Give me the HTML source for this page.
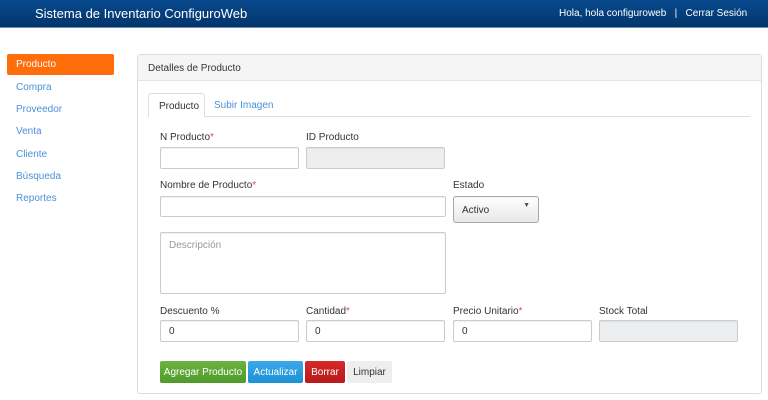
<!DOCTYPE html>
<html><head><meta charset="utf-8"><style>
*{box-sizing:border-box;margin:0;padding:0}
body{width:768px;height:400px;background:#fff;font-family:"Liberation Sans",sans-serif;font-size:10px;color:#333;position:relative;overflow:hidden}
.a{position:absolute;white-space:nowrap}
.hdr{left:0;top:0;width:768px;height:28px;background:linear-gradient(#084a8e,#03356a);border-bottom:1px solid #6a8fb5}
.in{position:absolute;border:1px solid #ccc;border-radius:2px;background:#fff;box-shadow:inset 0 1px 1px rgba(0,0,0,.06);padding-left:8px;font-size:10px;display:flex;align-items:center}
.dis{background:#eceeef}
.r{color:#d9534f}
.nav{left:16px;color:#4a90d9;font-size:10px}
.btn{position:absolute;top:361px;height:22px;border-radius:2px;color:#fff;display:flex;align-items:center;justify-content:center;font-size:10px}
</style></head><body>
<div class="a hdr"></div>
<div class="a" style="left:35px;top:6px;color:#fff;font-size:13px">Sistema de Inventario ConfiguroWeb</div>
<div class="a" style="left:559px;top:8px;color:#fff;font-size:10px">Hola, hola configuroweb &nbsp; | &nbsp; Cerrar Sesión</div>

<div class="a" style="left:7px;top:54px;width:107px;height:21px;background:#ff6c0a;border-radius:2px;color:#fff;padding:5px 0 0 9px">Producto</div>
<div class="a nav" style="top:82px">Compra</div>
<div class="a nav" style="top:104px">Proveedor</div>
<div class="a nav" style="top:126px">Venta</div>
<div class="a nav" style="top:149px">Cliente</div>
<div class="a nav" style="top:171px">Búsqueda</div>
<div class="a nav" style="top:193px">Reportes</div>

<div class="a" style="left:137px;top:54px;width:625px;height:340px;border:1px solid #ddd;border-radius:3px"></div>
<div class="a" style="left:138px;top:55px;width:623px;height:26px;background:#f5f5f5;border-bottom:1px solid #e5e5e5"></div>
<div class="a" style="left:148px;top:63px">Detalles de Producto</div>

<div class="a" style="left:148px;top:116px;width:602px;height:1px;background:#ddd"></div>
<div class="a" style="left:148px;top:93px;width:57px;height:24px;border:1px solid #ddd;border-bottom:none;background:#fff;border-radius:3px 3px 0 0;padding:7px 0 0 10px">Producto</div>
<div class="a" style="left:214px;top:100px;color:#4a90d9">Subir Imagen</div>

<div class="a" style="left:160px;top:132px">N Producto<span class="r">*</span></div>
<div class="a" style="left:306px;top:132px">ID Producto</div>
<div class="in" style="left:160px;top:147px;width:139px;height:22px"></div>
<div class="in dis" style="left:306px;top:147px;width:139px;height:22px"></div>

<div class="a" style="left:160px;top:180px">Nombre de Producto<span class="r">*</span></div>
<div class="a" style="left:453px;top:180px">Estado</div>
<div class="in" style="left:160px;top:196px;width:286px;height:21px"></div>
<div class="in" style="left:453px;top:196px;width:86px;height:27px;background:linear-gradient(#fff,#e8e8e8);border-color:#aaa;border-radius:3px;padding-top:2px">Activo<span style="position:absolute;right:8px;top:5px;font-size:7px;color:#555">▼</span></div>

<div class="in" style="left:160px;top:232px;width:286px;height:62px;align-items:flex-start;padding-top:7px;color:#999">Descripción</div>

<div class="a" style="left:160px;top:306px">Descuento %</div>
<div class="a" style="left:306px;top:306px">Cantidad<span class="r">*</span></div>
<div class="a" style="left:453px;top:306px">Precio Unitario<span class="r">*</span></div>
<div class="a" style="left:599px;top:306px">Stock Total</div>
<div class="in" style="left:160px;top:320px;width:139px;height:22px">0</div>
<div class="in" style="left:306px;top:320px;width:139px;height:22px">0</div>
<div class="in" style="left:453px;top:320px;width:139px;height:22px">0</div>
<div class="in dis" style="left:599px;top:320px;width:139px;height:22px"></div>

<div class="btn" style="left:160px;width:86px;background:linear-gradient(#6cb33f,#4f9a2a)">Agregar Producto</div>
<div class="btn" style="left:248px;width:55px;background:linear-gradient(#3aa9e8,#1e90d6)">Actualizar</div>
<div class="btn" style="left:305px;width:40px;background:linear-gradient(#d62a2a,#b81a1a)">Borrar</div>
<div class="btn" style="left:347px;width:45px;background:#eee;color:#333">Limpiar</div>
</body></html>
